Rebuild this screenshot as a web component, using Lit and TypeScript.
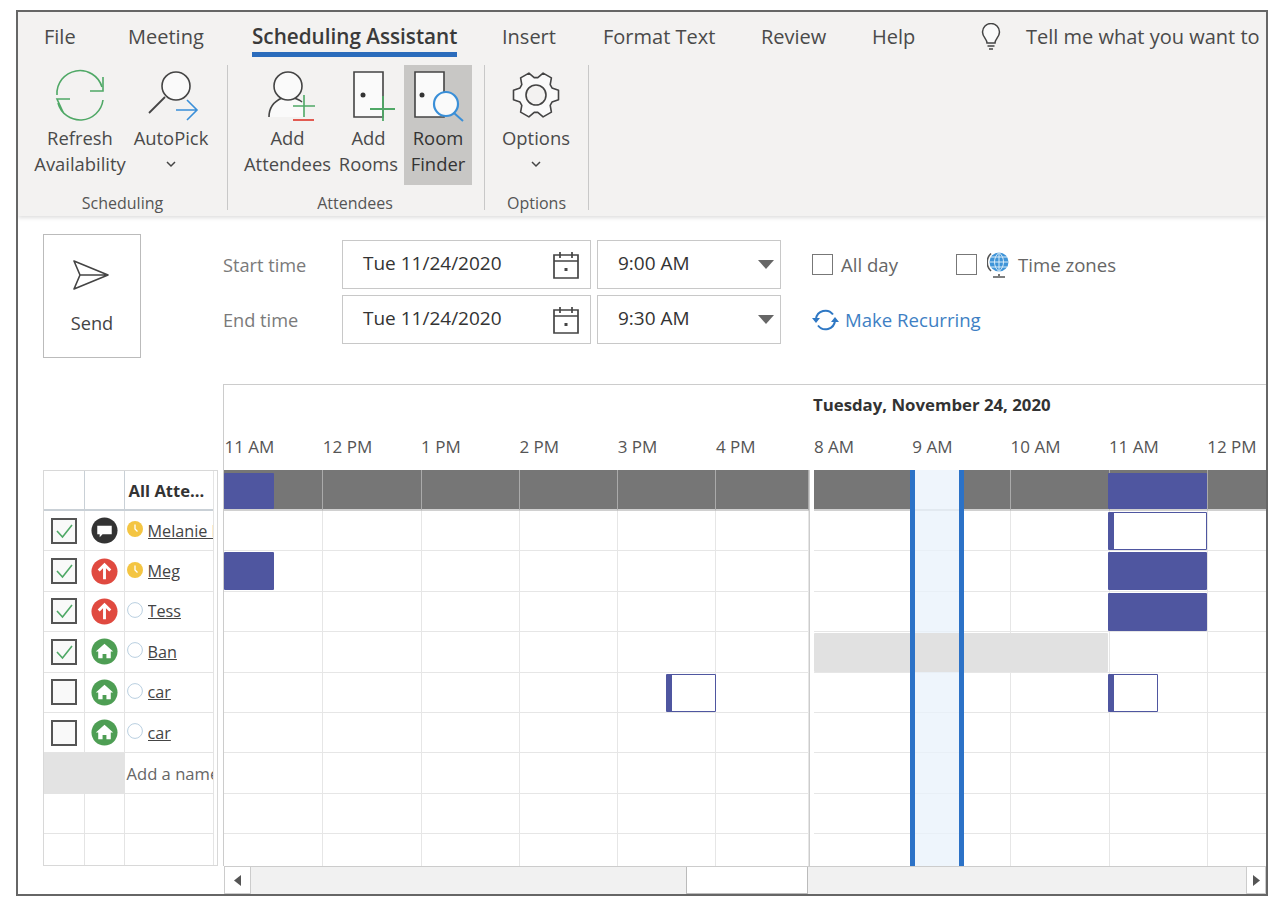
import { LitElement, html, css, svg } from "lit";
import { customElement } from "lit/decorators.js";

const gearPath = (() => {
  const cx = 25, cy = 25, rO = 23, rI = 17.5;
  const pts: string[] = [];
  for (let i = 0; i < 6; i++) {
    const a = (i * 60 * Math.PI) / 180;
    const p = (r: number, d: number) => {
      const t = a + (d * Math.PI) / 180;
      return `${(cx + r * Math.cos(t)).toFixed(1)} ${(cy + r * Math.sin(t)).toFixed(1)}`;
    };
    pts.push(p(rI, -24), p(rO, -12), p(rO, 12), p(rI, 24));
  }
  return "M" + pts.join("L") + "Z";
})();

const chevron = html`<svg class="chev" viewBox="0 0 12 8"><path d="M2 2l4 4 4-4" fill="none" stroke="#444" stroke-width="1.5"/></svg>`;

const icons = {
  refresh: svg`<g fill="none" stroke="#4fa866" stroke-width="1.6"><path d="M2 25A23 23 0 0 1 47 17"/><path d="M35 21H48V7"/><path d="M48 30A23 23 0 0 1 3 33"/><path d="M15 29H2L8 42"/></g>`,
  autopick: svg`<circle cx="30" cy="16" r="14" fill="#fafafa" stroke="#444" stroke-width="1.6"/><path d="M3 43L19 27" stroke="#444" stroke-width="1.8" fill="none"/><path d="M30 40H51M41 30L51 40L41 50" fill="none" stroke="#3a8fd8" stroke-width="1.6"/>`,
  attendee: svg`<path d="M6 47C6 36 12 30 19 28H31C36 30 40 33 42 38V47Z" fill="#fafafa"/><path d="M6 47C6 36 12 31 19 28M31 28C34 29 37 30 39 32" fill="none" stroke="#444" stroke-width="1.6"/><circle cx="25" cy="16" r="14" fill="#fafafa" stroke="#444" stroke-width="1.6"/><path d="M30 36H52M41 25V47" stroke="#4fa866" stroke-width="1.6"/><path d="M30 50H51" stroke="#e04a40" stroke-width="1.8"/>`,
  rooms: svg`<path d="M10 2H39V47H10Z" fill="#fafafa" stroke="#444" stroke-width="1.6"/><circle cx="19" cy="25" r="2.5" fill="#333"/><path d="M26 39H51M39 26V51" stroke="#4fa866" stroke-width="1.8"/>`,
  finder: svg`<path d="M2 2H31V47H2Z" fill="#fafafa" stroke="#444" stroke-width="1.6"/><circle cx="9" cy="25" r="2.5" fill="#333"/><circle cx="33" cy="34" r="12" fill="#fafafa" stroke="#3a8fd8" stroke-width="2.2"/><path d="M41 43L50 51" stroke="#3a8fd8" stroke-width="2"/>`,
  gear: svg`<path d="${gearPath}" fill="#fafafa" stroke="#444" stroke-width="1.6" stroke-linejoin="round"/><circle cx="25" cy="25" r="10" fill="#f3f2f1" stroke="#444" stroke-width="1.6"/>`,
};

const calIcon = html`<svg class="cal" viewBox="0 0 28 30"><path d="M2 5H26V28H2ZM2 11H26M8 2V8M20 2V8" fill="none" stroke="#444" stroke-width="1.7"/><rect x="12.5" y="18" width="3" height="3" fill="#444"/></svg>`;
const caret = html`<svg class="caret" viewBox="0 0 16 9"><path d="M0 0H16L8 9Z" fill="#666"/></svg>`;

const statusIcon = (k: string) => {
  if (k === "chat")
    return html`<svg class="st" viewBox="0 0 28 28"><circle cx="14" cy="14" r="13.5" fill="#333"/><path d="M6.5 9H21.5V18H12L9 21V18H6.5Z" fill="#fff"/></svg>`;
  if (k === "up")
    return html`<svg class="st" viewBox="0 0 28 28"><circle cx="14" cy="14" r="13.5" fill="#e04a40"/><path d="M14 22V7M8 13L14 7L20 13" fill="none" stroke="#fff" stroke-width="3"/></svg>`;
  return html`<svg class="st" viewBox="0 0 28 28"><circle cx="14" cy="14" r="13.5" fill="#4e9e54"/><path d="M14 6L23 14H20.5V21H16V16.5H12V21H7.5V14H5Z" fill="#fff"/></svg>`;
};
const respIcon = (k: string) =>
  k === "clock"
    ? html`<svg class="rs" viewBox="0 0 16 16"><circle cx="8" cy="8" r="8" fill="#f4c542"/><path d="M8 3.5V8L10.5 10.5" fill="none" stroke="#fff" stroke-width="1.3"/></svg>`
    : html`<svg class="rs" viewBox="0 0 16 16"><circle cx="8" cy="8" r="7.4" fill="#fff" stroke="#b9cfe0" stroke-width="1"/></svg>`;

const people = [
  { checked: true, status: "chat", resp: "clock", name: "Melanie L" },
  { checked: true, status: "up", resp: "clock", name: "Meg" },
  { checked: true, status: "up", resp: "none", name: "Tess" },
  { checked: true, status: "home", resp: "none", name: "Ban" },
  { checked: false, status: "home", resp: "none", name: "car" },
  { checked: false, status: "home", resp: "none", name: "car" },
];

const hours = ["11 AM", "12 PM", "1 PM", "2 PM", "3 PM", "4 PM", "", "8 AM", "9 AM", "10 AM", "11 AM", "12 PM"];
const ROW = 40.4;
const rowTop = (r: number) => 41 + r * ROW;
// x offsets relative to grid left (x = 224)
const events = [
  { kind: "busy", x: 0, w: 50, y: 3, h: 36 },
  { kind: "busy", x: 884, w: 99, y: 3, h: 36 },
  { kind: "tent", x: 884, w: 99, y: rowTop(0) + 1, h: 38 },
  { kind: "busy", x: 0, w: 50, y: rowTop(1) + 1, h: 38 },
  { kind: "busy", x: 884, w: 99, y: rowTop(1) + 1, h: 38 },
  { kind: "busy", x: 884, w: 99, y: rowTop(2) + 1, h: 38 },
  { kind: "oof", x: 590, w: 294, y: rowTop(3) + 0.5, h: 39 },
  { kind: "tent", x: 442, w: 50, y: rowTop(4) + 1, h: 38 },
  { kind: "tent", x: 884, w: 50, y: rowTop(4) + 1, h: 38 },
];

@customElement("app-root")
export class AppRoot extends LitElement {
  static styles = css`
    :host { display: block; width: 1276px; height: 908px; box-sizing: border-box; padding: 10px 8px 12px 16px; background: #fff; font-family: "Open Sans", "Noto Sans", sans-serif; color: #444; overflow: hidden; }
    .frame { box-sizing: border-box; height: 886px; border: 2px solid #666; display: flex; flex-direction: column; overflow: hidden; background: #fff; }
    .ribbon { height: 204px; flex: none; background: #f3f2f1; box-shadow: 0 2px 4px rgba(0,0,0,.13); position: relative; }
    .tabs { height: 53px; box-sizing: border-box; padding-left: 26px; display: grid; grid-template-columns: 84px 124px 250px 101px 158px 111px 108px 46px 1fr; white-space: nowrap; }
    .tab { font-size: 20px; line-height: 27px; padding-top: 11px; color: #4a4a4a; }
    .tab.active { font-size: 20.7px; font-weight: 600; color: #3a3a3a; justify-self: start; height: 45px; box-sizing: border-box; border-bottom: 5px solid #2b6cbc; padding-top: 11px; }
    .bulb { width: 22px; height: 28px; margin-top: 11px; }
    .groups { display: flex; height: 145px; }
    .group { display: flex; flex-direction: column; align-items: center; border-right: 1px solid #c8c8c8; box-sizing: border-box; }
    .g1 { width: 210px; padding-left: 12px; }
    .g2 { width: 257px; padding-left: 14px; }
    .g3 { width: 104px; }
    .btns { display: flex; height: 120px; align-self: flex-start; }
    .btn { box-sizing: border-box; height: 120px; padding-top: 5px; display: flex; flex-direction: column; align-items: center; font-size: 18.4px; line-height: 26px; color: #4a4a4a; white-space: nowrap; }
    .btn.sel { background: #c8c7c5; color: #333; }
    .btn svg.ic { width: 50px; height: 50px; overflow: visible; flex: none; margin-bottom: 5px; }
    .chev { width: 12px; height: 8px; margin-top: 9px; }
    .glabel { font-size: 16px; line-height: 14px; margin-top: 11px; color: #555; white-space: nowrap; }
    .g1 .glabel { margin-left: -12px; }
    .g2 .glabel { margin-left: -16px; }

    .form { margin: 18px 0 0 25px; height: 124px; display: flex; flex: none; }
    .send { box-sizing: border-box; width: 98px; height: 124px; border: 1px solid #bbb; display: flex; flex-direction: column; align-items: center; font-size: 18.2px; color: #444; padding-top: 24px; }
    .send svg { width: 36px; height: 32px; margin-bottom: 20px; margin-left: -2px; }
    .fields { margin: 6px 0 0 82px; display: grid; grid-template-columns: 119px 249px 184px 1fr; grid-template-rows: 49px 49px; column-gap: 0; row-gap: 6px; }
    .lbl { font-size: 18.2px; color: #7a7a7a; align-self: center; }
    .inp { box-sizing: border-box; border: 1px solid #c8c8c8; height: 49px; display: flex; align-items: center; font-size: 19px; color: #333; padding: 0 10px 0 20px; justify-content: space-between; }
    .inp > span { margin-top: -3px; }
    .time { margin-left: 6px; padding-right: 6px; padding-left: 20px; width: 184px; }
    .cal { width: 28px; height: 30px; }
    .caret { width: 16px; height: 9px; }
    .extra { margin-left: 37px; display: flex; align-items: center; font-size: 18.6px; color: #666; white-space: nowrap; }
    .cb { box-sizing: border-box; width: 21px; height: 21px; border: 1px solid #777; background: #fff; flex: none; margin-right: 8px; }
    .cb2 { margin-left: 58px; margin-right: 10px; }
    .globe { width: 23px; height: 27px; margin-right: 8px; }
    .recur { color: #3e7fc4; }
    .recur svg { width: 27px; height: 24px; margin-right: 6px; }

    .sched { margin: 26px 0 0 25px; display: flex; flex: none; height: 482px; }
    .att { box-sizing: border-box; margin-top: 86px; width: 175px; height: 396px; border: 1px solid #d8d8d8; padding-right: 3px; flex: none; }
    .att-grid { display: grid; grid-template-columns: 40.5px 40.5px 1fr; grid-template-rows: 40px repeat(8, 40.4px) 1fr; height: 100%; border-right: 1px solid #e4e4e4; width: 170px; box-sizing: border-box; }
    .c { box-sizing: border-box; border-right: 1px solid #e4e4e4; border-bottom: 1px solid #e4e4e4; display: flex; align-items: center; justify-content: center; min-width: 0; overflow: hidden; white-space: nowrap; }
    .c:nth-child(3n) { border-right: none; justify-content: flex-start; padding-left: 1.5px; }
    .hc { border-bottom: 2px solid #c9d0d6; border-right-color: #c9d0d6; font-weight: 700; font-size: 16.6px; color: #333; }
    .c.hc:nth-child(3n) { padding-left: 3.5px; }
    .c.add { background: #e3e3e3; border-color: #e3e3e3; }
    .c.last { border-bottom: none; }
    .addtxt { font-size: 16.6px; color: #666; }
    .chk { box-sizing: border-box; width: 26px; height: 26px; border: 2px solid #555; background: #f9f9f9; display: block; }
    .chk svg { display: block; width: 22px; height: 22px; }
    .st { width: 27px; height: 27px; }
    .rs { width: 16px; height: 16px; flex: none; margin-right: 5px; margin-top: -3px; }
    .name { font-size: 16.2px; color: #444; text-decoration: underline; overflow: hidden; }

    .tl { margin-left: 5px; flex: 1; min-width: 0; box-sizing: border-box; border-top: 1px solid #ccc; border-left: 1px solid #ccc; display: flex; flex-direction: column; }
    .date { height: 41px; padding: 9px 0 0 589px; box-sizing: border-box; font-size: 16.8px; font-weight: 700; color: #333; line-height: 22px; white-space: nowrap; }
    .hours { height: 44px; flex: none; box-sizing: border-box; display: grid; grid-template-columns: repeat(5, 98.3px) 94px 4px repeat(4, 98.3px) 1fr; }
    .hr { font-size: 17px; color: #555; padding: 10px 0 0 .5px; line-height: 22px; white-space: nowrap; }
    .body { position: relative; flex: 1; overflow: hidden; }
    .grid { display: grid; height: 100%; grid-template-rows: 41px repeat(8, 40.4px) 1fr; grid-template-columns: 99.3px repeat(4, 98.3px) 93px 4.5px 99px repeat(3, 98.3px) 1fr; }
    .g { box-sizing: border-box; border-right: 1px solid #e6e6e6; border-bottom: 1px solid #e6e6e6; }
    .g.head { background: #767676; border-right-color: #aaa; border-bottom: 2px solid #d0d0d0; }
    .g.gap { background: #fff; border-left: 1px solid #ccc; border-right: none; border-bottom: none; }
    .g.end { border-right: none; }
    .g.bottom { border-bottom: none; }
    .ev { position: absolute; box-sizing: border-box; border-radius: 1px; }
    .ev.busy { background: #4f56a0; }
    .ev.tent { background: #fff; border: 1px solid #4f56a0; border-left: 6px solid #4f56a0; }
    .ev.oof { background: #e1e1e1; }
    .sel-head { position: absolute; left: 686px; width: 54px; top: 0; height: 39px; background: #eff5fc; }
    .sel-fill { position: absolute; left: 686px; width: 54px; top: 39px; bottom: 0; background: rgba(232,241,251,.75); }
    .sel-bars { position: absolute; left: 686px; width: 54px; top: 0; bottom: 0; box-sizing: border-box; border-left: 5px solid #2c72c7; border-right: 5px solid #2c72c7; }

    .sb { margin-left: 206px; height: 28px; flex: none; background: #f1f1f1; border-top: 1px solid #ccc; box-sizing: border-box; display: grid; grid-template-columns: 27px 435px 122px 1fr 20px; }
    .sb-btn { background: #fff; border: 1px solid #ccc; border-top: none; box-sizing: border-box; display: flex; align-items: center; justify-content: center; }
    .sb-btn svg { width: 7px; height: 11px; }
    .thumb { background: #fff; border: 1px solid #bbb; border-top: none; box-sizing: border-box; }
  `;

  private ribbonBtn(icon: unknown, lines: unknown[], width: number, sel = false) {
    return html`<div class="btn ${sel ? "sel" : ""}" style="width:${width}px">
      <svg class="ic" viewBox="0 0 50 50">${icon}</svg>
      ${lines}
    </div>`;
  }

  render() {
    const cols = 12;
    const cells = [];
    for (let r = 0; r < 10; r++) {
      for (let c = 0; c < cols; c++) {
        const cl = ["g"];
        if (c === 6) cl.push("gap");
        else if (r === 0) cl.push("head");
        if (c === cols - 1) cl.push("end");
        if (r === 9) cl.push("bottom");
        cells.push(html`<div class=${cl.join(" ")}></div>`);
      }
    }
    return html`<div class="frame">
      <div class="ribbon">
        <div class="tabs">
          <div class="tab">File</div>
          <div class="tab">Meeting</div>
          <div class="tab active">Scheduling Assistant</div>
          <div class="tab">Insert</div>
          <div class="tab">Format Text</div>
          <div class="tab">Review</div>
          <div class="tab">Help</div>
          <svg class="bulb" viewBox="0 0 22 28"><path d="M7 20C7 16 2.5 14 2.5 9A8.5 8.5 0 0 1 19.5 9C19.5 14 15 16 15 20ZM7.5 23H14.5M9 26H13" fill="#fafafa" stroke="#444" stroke-width="1.5"/></svg>
          <div class="tab">Tell me what you want to</div>
        </div>
        <div class="groups">
          <div class="group g1">
            <div class="btns">
              ${this.ribbonBtn(icons.refresh, [html`<span>Refresh</span><span>Availability</span>`], 100)}
              ${this.ribbonBtn(icons.autopick, [html`<span>AutoPick</span>`, chevron], 82)}
            </div>
            <div class="glabel">Scheduling</div>
          </div>
          <div class="group g2">
            <div class="btns">
              ${this.ribbonBtn(icons.attendee, [html`<span>Add</span><span>Attendees</span>`], 91)}
              ${this.ribbonBtn(icons.rooms, [html`<span>Add</span><span>Rooms</span>`], 71)}
              ${this.ribbonBtn(icons.finder, [html`<span>Room</span><span>Finder</span>`], 68, true)}
            </div>
            <div class="glabel">Attendees</div>
          </div>
          <div class="group g3">
            <div class="btns">
              ${this.ribbonBtn(icons.gear, [html`<span>Options</span>`, chevron], 102)}
            </div>
            <div class="glabel">Options</div>
          </div>
        </div>
      </div>

      <div class="form">
        <div class="send">
          <svg viewBox="0 0 36 32"><path d="M1 2L35 16L1 30L7 16ZM7 16H35" fill="none" stroke="#444" stroke-width="1.6" stroke-linejoin="round"/></svg>
          <span>Send</span>
        </div>
        <div class="fields">
          <div class="lbl">Start time</div>
          <div class="inp"><span>Tue 11/24/2020</span>${calIcon}</div>
          <div class="inp time"><span>9:00 AM</span>${caret}</div>
          <div class="extra">
            <span class="cb"></span>All day
            <span class="cb cb2"></span>
            <svg class="globe" viewBox="0 0 23 27"><circle cx="12" cy="11" r="9.5" fill="#3f94d8"/><path d="M12 1.5V20.5M2.5 11H21.5M4 6H20M4 16H20M12 1.5C6 6 6 16 12 20.5M12 1.5C18 6 18 16 12 20.5" fill="none" stroke="#d8ebf8" stroke-width="1"/><path d="M4 2.5A12 12 0 0 0 4 20M12 23V25M6 26H18" fill="none" stroke="#555" stroke-width="1.6"/></svg>
            Time zones
          </div>
          <div class="lbl">End time</div>
          <div class="inp"><span>Tue 11/24/2020</span>${calIcon}</div>
          <div class="inp time"><span>9:30 AM</span>${caret}</div>
          <div class="extra recur">
            <svg viewBox="0 0 27 24"><path d="M4 11A9.5 9.5 0 0 1 21 6.5M23 13A9.5 9.5 0 0 1 6 17.5" fill="none" stroke="#2f78c4" stroke-width="2"/><path d="M0 10H8L4 15ZM19 14H27L23 9Z" fill="#2f78c4"/></svg>
            Make Recurring
          </div>
        </div>
      </div>

      <div class="sched">
        <div class="att">
          <div class="att-grid">
            <div class="c hc"></div><div class="c hc"></div><div class="c hc">All Atte...</div>
            ${people.map(
              (p) => html`
                <div class="c"><span class="chk">${p.checked ? html`<svg viewBox="0 0 22 22"><path d="M4 11L9.5 17L19 5" fill="none" stroke="#4fa866" stroke-width="1.6"/></svg>` : ""}</span></div>
                <div class="c">${statusIcon(p.status)}</div>
                <div class="c">${respIcon(p.resp)}<span class="name">${p.name}</span></div>`
            )}
            <div class="c add"></div><div class="c add"></div><div class="c"><span class="addtxt">Add a name</span></div>
            <div class="c"></div><div class="c"></div><div class="c"></div>
            <div class="c last"></div><div class="c last"></div><div class="c last"></div>
          </div>
        </div>
        <div class="tl">
          <div class="date">Tuesday, November 24, 2020</div>
          <div class="hours">${hours.map((h) => html`<div class="hr">${h}</div>`)}</div>
          <div class="body">
            <div class="grid">${cells}</div>
            <div class="sel-head"></div>
            <div class="sel-fill"></div>
            ${events.map(
              (e) => html`<div class="ev ${e.kind}" style="left:${e.x}px;top:${e.y}px;width:${e.w}px;height:${e.h}px"></div>`
            )}
            <div class="sel-bars"></div>
          </div>
        </div>
      </div>

      <div class="sb">
        <div class="sb-btn"><svg viewBox="0 0 7 11"><path d="M7 0V11L0 5.5Z" fill="#555"/></svg></div>
        <div></div>
        <div class="thumb"></div>
        <div></div>
        <div class="sb-btn"><svg viewBox="0 0 7 11"><path d="M0 0V11L7 5.5Z" fill="#555"/></svg></div>
      </div>
    </div>`;
  }
}
